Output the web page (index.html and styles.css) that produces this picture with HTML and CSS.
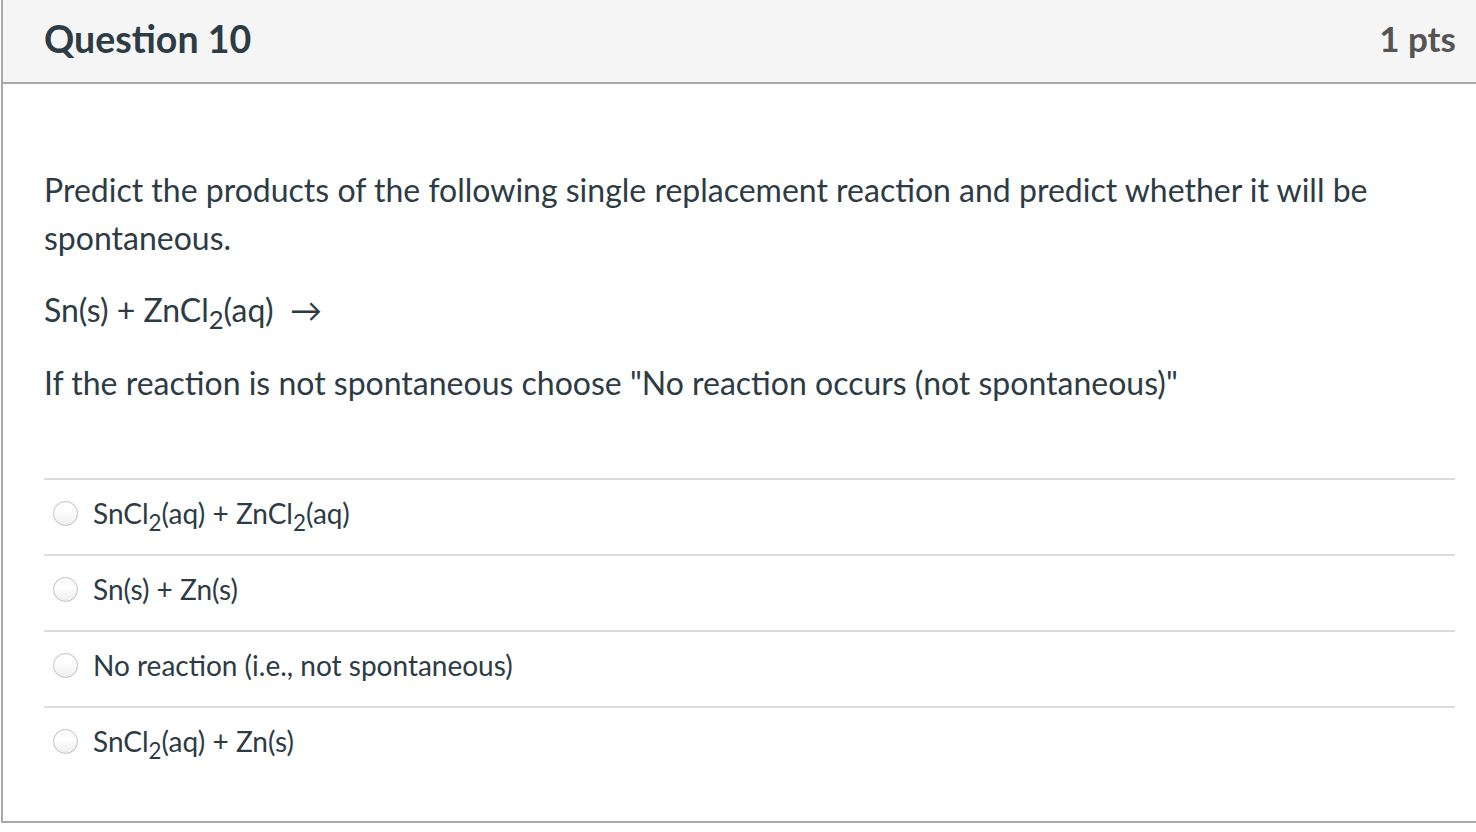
FILE: index.html
```html
<!DOCTYPE html>
<html>
<head>
<meta charset="utf-8">
<link rel="stylesheet" href="styles.css">
</head>
<body>
<div class="question">
  <div class="header">
    <div class="title">Question 10</div>
    <div class="pts">1 pts</div>
  </div>
  <div class="content">
    <p class="text">Predict the products of the following single replacement reaction and predict whether it will be spontaneous.</p>
    <p class="text formula">Sn(s) + ZnCl<sub>2</sub>(aq) &nbsp;→</p>
    <p class="text">If the reaction is not spontaneous choose "No reaction occurs (not spontaneous)"</p>
    <div class="answers">
      <div class="answer"><span class="radio"></span><span class="label">SnCl<sub>2</sub>(aq) + ZnCl<sub>2</sub>(aq)</span></div>
      <div class="answer"><span class="radio"></span><span class="label">Sn(s) + Zn(s)</span></div>
      <div class="answer"><span class="radio"></span><span class="label">No reaction (i.e., not spontaneous)</span></div>
      <div class="answer"><span class="radio"></span><span class="label">SnCl<sub>2</sub>(aq) + Zn(s)</span></div>
    </div>
  </div>
</div>
</body>
</html>
```

FILE: styles.css
```css
html, body {
  margin: 0;
  padding: 0;
  background: #fff;
  overflow: hidden;
}
body {
  font-family: Lato, "Open Sans", sans-serif;
  color: #2d3b45;
}
.question {
  margin-left: 1px;
  border-left: 2px solid #a9a9a9;
  border-bottom: 2px solid #a9a9a9;
  width: 1500px;
  box-sizing: border-box;
}
.header {
  height: 84px;
  background: #f5f5f5;
  border-bottom: 2px solid #a9a9a9;
  display: flex;
  align-items: center;
  justify-content: space-between;
  padding: 0 20px 6px 41px;
  width: 1473px;
  box-sizing: border-box;
}
.title {
  font-size: 37.5px;
  font-weight: 700;
  color: #2d3b45;
}
.pts {
  font-size: 35px;
  font-weight: 700;
  color: #555;
}
.content {
  padding: 82px 0 39px 41px;
  width: 1452px;
  box-sizing: border-box;
}
.text {
  margin: 0 0 24px;
  font-size: 32px;
  line-height: 48px;
}
.formula {
  margin-bottom: 25px;
}
sub {
  line-height: 0;
  font-size: 0.8em;
}
.answers {
  margin-top: 71px;
}
.answer {
  border-top: 2px solid #dcdcdc;
  height: 66px;
  padding-bottom: 8px;
  display: flex;
  align-items: center;
}
.radio {
  width: 25px;
  height: 25px;
  border-radius: 50%;
  border: 1px solid #bfbfbf;
  background: linear-gradient(#ffffff 40%, #eeeeee);
  box-sizing: border-box;
  margin-left: 9px;
  margin-right: 15px;
  flex: none;
}
.label {
  font-size: 28px;
}
```
